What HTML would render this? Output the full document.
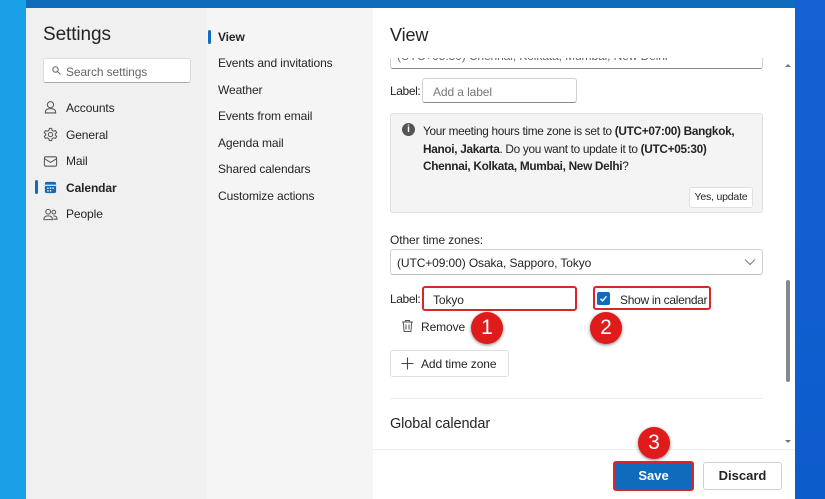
<!DOCTYPE html>
<html><head><meta charset="utf-8"><style>
*{box-sizing:border-box;margin:0;padding:0}
body{width:825px;height:499px;overflow:hidden;font-family:"Liberation Sans",sans-serif;color:#242424;background:#fff;position:relative}
.a{position:absolute}
.t{position:absolute;font-size:12px;line-height:14px;white-space:nowrap;letter-spacing:-0.1px}
.inp{position:absolute;background:#fff;border:1px solid #d1d1d1;border-bottom-color:#8a8a8a;border-radius:3px}
.circ{position:absolute;width:32px;height:32px;border-radius:50%;background:#e01b1b;color:#fff;font-size:21px;text-align:center;line-height:32px;box-shadow:0 1px 3px rgba(0,0,0,.5)}
.ico{position:absolute;width:15px;height:15px}
</style></head><body>
<div class="a" style="left:0;top:0;width:26px;height:499px;background:#1aa0e6"></div>
<div class="a" style="left:795px;top:0;width:30px;height:499px;background:linear-gradient(#1461d4,#0d5ccc)"></div>
<div class="a" style="left:26px;top:0;width:769px;height:8px;background:#0f6cbd"></div>
<div class="a" style="left:26px;top:8px;width:181px;height:491px;background:#f0f0f0"></div>
<div class="a" style="left:207px;top:8px;width:166px;height:491px;background:#f5f5f5"></div>
<div class="a" style="left:373px;top:8px;width:422px;height:491px;background:#fff"></div>

<div class="t" style="left:43px;top:24px;font-size:19px;line-height:22px">Settings</div>
<div class="inp" style="left:43px;top:58px;width:148px;height:25px;border-color:#ddd;border-bottom-color:#aaa"></div>
<svg class="a" style="left:52px;top:66px" width="9" height="9" viewBox="0 0 9 9"><circle cx="3.5" cy="3.5" r="2.7" fill="none" stroke="#666" stroke-width="1"/><path d="M5.5 5.5L8.5 8.5" stroke="#666"/></svg>
<div class="t" style="left:66px;top:65px;color:#666">Search settings</div>

<svg class="ico" style="left:43px;top:100px" viewBox="0 0 16 16" fill="none" stroke="#555" stroke-width="1.1"><circle cx="8" cy="5" r="3.3"/><path d="M2.5 13c0-2.5 2-3.8 5.5-3.8s5.5 1.3 5.5 3.8v.8h-11z"/></svg>
<div class="t" style="left:66px;top:101px">Accounts</div>
<svg class="ico" style="left:43px;top:127px" viewBox="0 0 16 16" fill="none" stroke="#555" stroke-width="1.1"><circle cx="8" cy="8" r="2.3"/><path d="M6.8 1.5h2.4l.5 2 1.7 1 2-.6 1.2 2.1-1.5 1.4v1.2l1.5 1.4-1.2 2.1-2-.6-1.7 1-.5 2H6.8l-.5-2-1.7-1-2 .6-1.2-2.1 1.5-1.4V7.4L1.4 6l1.2-2.1 2 .6 1.7-1z"/></svg>
<div class="t" style="left:66px;top:128px">General</div>
<svg class="ico" style="left:43px;top:154px" viewBox="0 0 16 16" fill="none" stroke="#555" stroke-width="1.1"><rect x="1.5" y="3" width="13" height="10" rx="1.5"/><path d="M1.5 5l6.5 4 6.5-4"/></svg>
<div class="t" style="left:66px;top:154px">Mail</div>
<div class="a" style="left:35px;top:180px;width:3px;height:14px;background:#0f6cbd;border-radius:2px"></div>
<svg class="ico" style="left:43px;top:180px" viewBox="0 0 16 16"><rect x="2" y="2" width="12" height="12" rx="2" fill="#0f6cbd"/><rect x="2" y="5" width="12" height="1.2" fill="#fff"/><g fill="#fff"><rect x="4.5" y="8" width="1.5" height="1.5"/><rect x="7.3" y="8" width="1.5" height="1.5"/><rect x="10" y="8" width="1.5" height="1.5"/><rect x="4.5" y="10.8" width="1.5" height="1.5"/><rect x="7.3" y="10.8" width="1.5" height="1.5"/></g></svg>
<div class="t" style="left:66px;top:181px;font-weight:bold">Calendar</div>
<svg class="ico" style="left:43px;top:207px" viewBox="0 0 16 16" fill="none" stroke="#555" stroke-width="1.1"><circle cx="5.5" cy="5" r="2.5"/><circle cx="11.5" cy="5.5" r="2"/><path d="M1 13c0-2.300 1.5-3.5 4.5-3.5S10 10.7 10 13v.5H1zM11 9.5c2.5 0 4 1 4 3v.5h-4"/></svg>
<div class="t" style="left:66px;top:207px">People</div>

<div class="a" style="left:208px;top:30px;width:3px;height:14px;background:#0f6cbd;border-radius:2px"></div>
<div class="t" style="left:218px;top:30px;font-weight:bold">View</div>
<div class="t" style="left:218px;top:56px">Events and invitations</div>
<div class="t" style="left:218px;top:83px">Weather</div>
<div class="t" style="left:218px;top:109px">Events from email</div>
<div class="t" style="left:218px;top:136px">Agenda mail</div>
<div class="t" style="left:218px;top:162px">Shared calendars</div>
<div class="t" style="left:218px;top:189px">Customize actions</div>

<div class="t" style="left:390px;top:24px;font-size:18px;line-height:22px">View</div>
<div class="a" style="left:373px;top:58px;width:422px;height:392px;overflow:hidden">
 <div class="inp" style="left:17px;top:-20px;width:373px;height:31px"></div>
 <div class="t" style="left:24px;top:-9px;color:#666">(UTC+05:30) Chennai, Kolkata, Mumbai, New Delhi</div>
</div>
<div class="t" style="left:390px;top:84px;letter-spacing:-0.4px">Label:</div>
<div class="inp" style="left:422px;top:78px;width:155px;height:25px"></div>
<div class="t" style="left:433px;top:85px;color:#777">Add a label</div>

<div class="a" style="left:390px;top:113px;width:373px;height:100px;background:#f4f4f4;border:1px solid #e0e0e0;border-radius:3px"></div>
<div class="a" style="left:402px;top:123px;width:13px;height:13px;border-radius:50%;background:#555;color:#fff;font-size:10px;line-height:13px;text-align:center;font-weight:bold">i</div>
<div class="t" style="left:423px;top:123px;line-height:17.5px;font-size:11.8px;letter-spacing:-0.3px">Your meeting hours time zone is set to <b>(UTC+07:00) Bangkok,</b><br><b>Hanoi, Jakarta</b>. Do you want to update it to <b>(UTC+05:30)</b><br><b>Chennai, Kolkata, Mumbai, New Delhi</b>?</div>
<div class="a" style="left:689px;top:187px;width:64px;height:21px;background:#fff;border:1px solid #e0e0e0;border-radius:3px;font-size:10.5px;line-height:19px;text-align:center;letter-spacing:-0.2px">Yes, update</div>

<div class="t" style="left:390px;top:233px">Other time zones:</div>
<div class="inp" style="left:390px;top:249px;width:373px;height:26px;border-bottom-color:#bbb"></div>
<div class="t" style="left:397px;top:256px">(UTC+09:00) Osaka, Sapporo, Tokyo</div>
<svg class="a" style="left:744px;top:258px" width="12" height="8" viewBox="0 0 12 8"><path d="M1 1.5l5 5 5-5" fill="none" stroke="#777" stroke-width="1"/></svg>

<div class="t" style="left:390px;top:292px;letter-spacing:-0.4px">Label:</div>
<div class="a" style="left:422px;top:286px;width:155px;height:25px;border:2px solid #d9262c;border-radius:3px;background:#fff"></div>
<div class="t" style="left:433px;top:293px">Tokyo</div>
<div class="a" style="left:593px;top:286px;width:118px;height:24px;border:2px solid #d9262c;border-radius:3px"></div>
<div class="a" style="left:597px;top:292px;width:13px;height:13px;background:#0f6cbd;border-radius:2px"></div>
<svg class="a" style="left:597px;top:292px" width="13" height="13" viewBox="0 0 13 13"><path d="M3.5 6.8l2 2 4-4.5" fill="none" stroke="#fff" stroke-width="1.4"/></svg>
<div class="t" style="left:620px;top:293px;letter-spacing:-0.3px">Show in calendar</div>

<svg class="a" style="left:401px;top:319px" width="13" height="14" viewBox="0 0 13 14" fill="none" stroke="#555" stroke-width="1"><path d="M1 3h11M4.5 3V1.5h4V3M2.3 3l.8 9.5h6.8l.8-9.5M5 5.5v5M8 5.5v5"/></svg>
<div class="t" style="left:421px;top:320px">Remove</div>
<div class="circ" style="left:471px;top:312px">1</div>
<div class="circ" style="left:590px;top:312px">2</div>

<div class="a" style="left:390px;top:350px;width:119px;height:27px;background:#fff;border:1px solid #e0e0e0;border-radius:3px"></div>
<svg class="a" style="left:401px;top:357px" width="13" height="13" viewBox="0 0 13 13"><path d="M6.5 0.5v12M0.5 6.5h12" stroke="#444" stroke-width="1.1"/></svg>
<div class="t" style="left:421px;top:357px">Add time zone</div>
<div class="a" style="left:390px;top:398px;width:373px;height:1px;background:#eee"></div>
<div class="t" style="left:390px;top:416px;font-size:14.5px;line-height:17px">Global calendar</div>

<div class="a" style="left:786px;top:280px;width:4px;height:102px;background:#888;border-radius:2px"></div>
<div class="a" style="left:785px;top:64px;width:0;height:0;border-left:3px solid transparent;border-right:3px solid transparent;border-bottom:3px solid #777"></div>
<div class="a" style="left:785px;top:440px;width:0;height:0;border-left:3px solid transparent;border-right:3px solid transparent;border-top:3px solid #777"></div>
<div class="a" style="left:373px;top:449px;width:422px;height:1px;background:#f0f0f0"></div>

<div class="circ" style="left:638px;top:427px">3</div>
<div class="a" style="left:613px;top:461px;width:81px;height:30px;border:2px solid #d9262c;border-radius:3px;background:#0f6cbd;color:#fff;font-weight:bold;font-size:13px;line-height:26px;text-align:center">Save</div>
<div class="a" style="left:703px;top:462px;width:79px;height:28px;border:1px solid #d1d1d1;border-radius:3px;background:#fff;font-weight:bold;font-size:13px;line-height:26px;text-align:center">Discard</div>
</body></html>
